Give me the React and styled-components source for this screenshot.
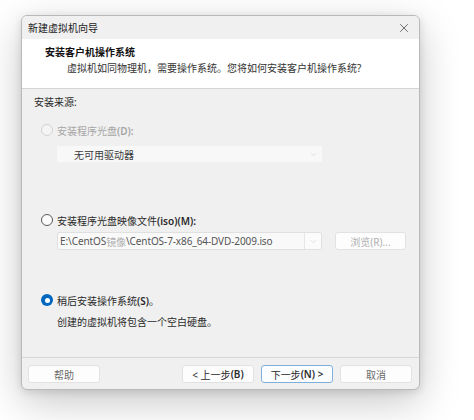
import React from "react";
import styled, { createGlobalStyle } from "styled-components";
import { X, ChevronDown } from "lucide-react";

const GlobalStyle = createGlobalStyle`
  html, body {
    margin: 0;
    background: #ffffff;
  }
  body {
    font-family: "Noto Sans", "Noto Sans CJK SC", sans-serif;
    font-size: 10px;
    color: #1a1a1a;
  }
`;

const Page = styled.div`
  padding: 15px 0 0 21px;
  height: 405px;
`;

const Window = styled.div`
  width: 399px;
  height: 375px;
  box-sizing: border-box;
  display: flex;
  flex-direction: column;
  background: #f0f0f0;
  border: 1px solid #b9b9b9;
  border-radius: 6px;
  overflow: hidden;
  box-shadow: 0 12px 40px rgba(0, 0, 0, 0.22), 0 2px 8px rgba(0, 0, 0, 0.12);
`;

const TitleBar = styled.div`
  height: 23px;
  display: flex;
  align-items: center;
  justify-content: space-between;
  padding: 0 8px 0 6px;
  background: #f0f0f0;
  font-size: 10px;
  color: #1a1a1a;
`;

const Close = styled.div`
  display: flex;
  color: #222;
`;

const Header = styled.div`
  height: 50px;
  box-sizing: border-box;
  background: #ffffff;
  border-bottom: 1px solid #d4d4d4;
  padding: 6px 0 0 23px;
`;

const Heading = styled.div`
  font-weight: 700;
  font-size: 10px;
  line-height: 14px;
  color: #111;
`;

const Subtitle = styled.div`
  margin: 2px 0 0 22px;
  line-height: 14px;
  color: #333;
`;

const Body = styled.div`
  flex: 1;
  display: flex;
  flex-direction: column;
  padding: 6px 0 0 12px;
`;

const Text = styled.div`
  line-height: 14px;
  margin-top: ${(p) => p.$top || 0}px;
  margin-left: ${(p) => p.$indent || 0}px;
  color: ${(p) => (p.$muted ? "#a6a6a6" : "#2a2a2a")};
`;

const Key = styled.span`
  font-weight: 600;
`;

const RadioRow = styled.div`
  display: flex;
  align-items: center;
  gap: 4px;
  height: 14px;
  margin: ${(p) => p.$top}px 0 0 7px;
  color: ${(p) => (p.$disabled ? "#a6a6a6" : "#2a2a2a")};
`;

const Radio = styled.span`
  width: 12px;
  height: 12px;
  box-sizing: border-box;
  border-radius: 50%;
  flex: none;
  display: flex;
  align-items: center;
  justify-content: center;
  border: ${(p) =>
    p.$checked ? "none" : p.$disabled ? "1px solid #d2d2d2" : "1px solid #5a5a5a"};
  background: ${(p) => (p.$checked ? "#0067c0" : p.$disabled ? "#f4f4f4" : "#fbfbfb")};

  &::after {
    content: "";
    display: ${(p) => (p.$checked ? "block" : "none")};
    width: 5px;
    height: 5px;
    border-radius: 50%;
    background: #ffffff;
  }
`;

const Select = styled.div`
  width: 265px;
  height: 16px;
  box-sizing: border-box;
  margin: 9px 0 0 23px;
  display: flex;
  align-items: center;
  justify-content: space-between;
  padding: 0 4px 0 17px;
  background: #f8f8f8;
  color: #3a3a3a;
`;

const InputRow = styled.div`
  display: flex;
  align-items: center;
  gap: 13px;
  margin: 5px 0 0 23px;
`;

const Combo = styled.div`
  width: 265px;
  height: 18px;
  box-sizing: border-box;
  display: flex;
  background: #f9f9f9;
  border: 1px solid #e0e0e0;
  border-radius: 2px;
  color: #555;
`;

const ComboText = styled.div`
  flex: 1;
  display: flex;
  align-items: center;
  padding-left: 2px;
  white-space: nowrap;
  overflow: hidden;
  letter-spacing: -0.1px;
`;

const Faint = styled.span`
  color: #b0b0b0;
`;

const ComboArrow = styled.div`
  width: 16px;
  display: flex;
  align-items: center;
  justify-content: center;
  border-left: 1px solid #e6e6e6;
  background: #fbfbfb;
  color: #c4c4c4;
`;

const Chevron = styled.span`
  display: flex;
  color: #c4c4c4;
`;

const Footer = styled.div`
  height: 32px;
  box-sizing: border-box;
  border-top: 1px solid #d8d8d8;
  display: flex;
  align-items: flex-start;
  gap: 7px;
  padding: 7px 7px 0 6px;
`;

const Spacer = styled.div`
  flex: 1;
`;

const Button = styled.div`
  width: ${(p) => p.$w || 72}px;
  height: 18px;
  box-sizing: border-box;
  display: flex;
  align-items: center;
  justify-content: center;
  border-radius: 3px;
  background: ${(p) => (p.$primary ? "#fbfdff" : "#fdfdfd")};
  border: 1px solid ${(p) => (p.$primary ? "#7fb0dc" : "#e2e2e2")};
  color: ${(p) => (p.$disabled ? "#b0b0b0" : p.$soft ? "#6a6a6a" : "#2a2a2a")};
  font-size: 10px;
`;

export default function App() {
  return (
    <>
      <GlobalStyle />
      <Page>
        <Window>
          <TitleBar>
            <span>新建虚拟机向导</span>
            <Close>
              <X size={14} strokeWidth={1.1} />
            </Close>
          </TitleBar>
          <Header>
            <Heading>安装客户机操作系统</Heading>
            <Subtitle>虚拟机如同物理机，需要操作系统。您将如何安装客户机操作系统?</Subtitle>
          </Header>
          <Body>
            <Text>安装来源:</Text>

            <RadioRow $top={14} $disabled>
              <Radio $disabled />
              <span>
                安装程序光盘<Key>(D):</Key>
              </span>
            </RadioRow>
            <Select>
              <span>无可用驱动器</span>
              <Chevron>
                <ChevronDown size={9} strokeWidth={1.2} />
              </Chevron>
            </Select>

            <RadioRow $top={51}>
              <Radio />
              <span>
                安装程序光盘映像文件<Key>(iso)(M):</Key>
              </span>
            </RadioRow>
            <InputRow>
              <Combo>
                <ComboText>
                  E:\CentOS<Faint>镜像</Faint>\CentOS-7-x86_64-DVD-2009.iso
                </ComboText>
                <ComboArrow>
                  <ChevronDown size={9} strokeWidth={1.2} />
                </ComboArrow>
              </Combo>
              <Button $w={71} $disabled>
                浏览(R)...
              </Button>
            </InputRow>

            <RadioRow $top={43}>
              <Radio $checked />
              <span>
                稍后安装操作系统<Key>(S)</Key>。
              </span>
            </RadioRow>
            <Text $top={8} $indent={23}>
              创建的虚拟机将包含一个空白硬盘。
            </Text>
          </Body>
          <Footer>
            <Button $soft>帮助</Button>
            <Spacer />
            <Button>
              &lt; 上一步<Key>(B)</Key>
            </Button>
            <Button $primary>
              下一步<Key>(N) &gt;</Key>
            </Button>
            <Button $soft>取消</Button>
          </Footer>
        </Window>
      </Page>
    </>
  );
}
